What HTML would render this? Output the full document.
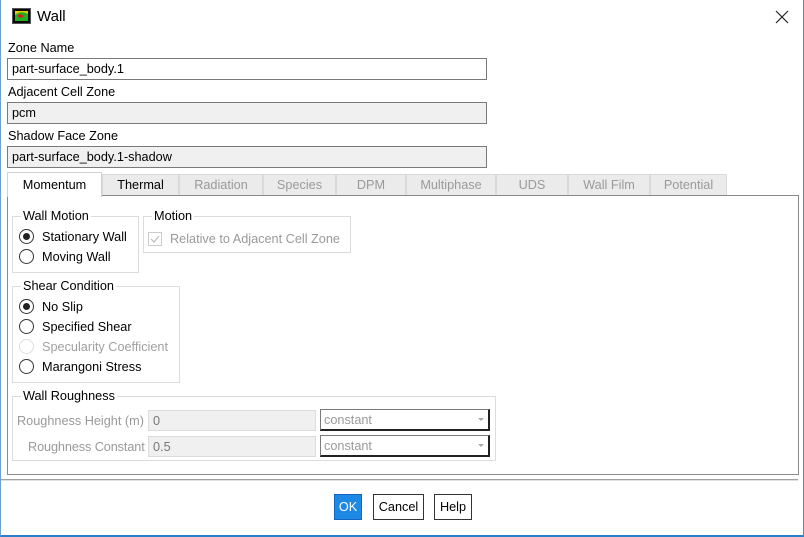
<!DOCTYPE html>
<html><head><meta charset="utf-8"><style>
*{box-sizing:border-box;margin:0;padding:0}
body{width:804px;height:537px;background:#fff;font-family:"Liberation Sans",sans-serif;font-size:12.7px;color:#000;position:relative;overflow:hidden}
.a{position:absolute;white-space:nowrap}
.frame{position:absolute;left:0;top:0;width:804px;height:537px;border-left:1px solid #6f9fd0;border-right:1px solid #3c8fd0;border-bottom:2px solid #2b7fc8}
.inp{position:absolute;border:1px solid #7a7a7a;height:22px;padding-left:4px;line-height:20px;font-size:12.7px}
.dis{background:#f0f0f0}
.tab{position:absolute;top:174px;height:21px;background:#ebebeb;border:1px solid #dadada;border-bottom:none;text-align:center;line-height:21px;color:#9a9a9a}
.grp{position:absolute;border:1px solid #dcdcdc}
.lg{position:absolute;background:#fff;padding:0 2px;top:-8px;left:8px;line-height:14px}
.rad{position:absolute;width:15px;height:15px;border:1px solid #333;border-radius:50%;background:#fff}
.rad.on::after{content:"";position:absolute;left:3px;top:3px;width:7px;height:7px;border-radius:50%;background:#222}
.sel{position:absolute;left:320px;width:170px;height:22px;border:1px solid #7a7a7a;border-right:2px solid #222;border-bottom:2px solid #222;color:#9a9a9a;padding-left:3px;line-height:21px}
.sel::after{content:"";position:absolute;right:4px;top:8px;border-left:3px solid transparent;border-right:3px solid transparent;border-top:3px solid #aaa}
.btn{position:absolute;top:494px;height:26px;border:1px solid #333;background:#fff;text-align:center;line-height:24px}
</style></head><body>
<div class="frame"></div>
<svg class="a" style="left:12px;top:8px" width="19" height="16" viewBox="0 0 19 16"><rect x="0.5" y="0.5" width="18" height="15" fill="#0a0a0a" stroke="#555"/><rect x="3" y="3" width="13" height="10" fill="#e0d000"/><path d="M3 7 Q9 2 16 6 L16 13 L3 13Z" fill="#20b020"/><path d="M6 7 Q9 5 12 8 Q9 11 6 9Z" fill="#d02020"/></svg>
<div class="a" style="left:37px;top:8px;font-size:15px">Wall</div>
<svg class="a" style="left:775px;top:10px" width="14" height="14"><path d="M1 1L13 13M13 1L1 13" stroke="#222" stroke-width="1.2"/></svg>

<div class="a" style="left:8px;top:41px">Zone Name</div>
<div class="inp" style="left:7px;top:58px;width:480px">part-surface_body.1</div>
<div class="a" style="left:8px;top:85px">Adjacent Cell Zone</div>
<div class="inp dis" style="left:7px;top:102px;width:480px">pcm</div>
<div class="a" style="left:8px;top:129px">Shadow Face Zone</div>
<div class="inp dis" style="left:7px;top:146px;width:480px">part-surface_body.1-shadow</div>

<div class="tab" style="left:102px;width:77px;color:#000">Thermal</div>
<div class="tab" style="left:179px;width:84px">Radiation</div>
<div class="tab" style="left:263px;width:73px">Species</div>
<div class="tab" style="left:336px;width:70px">DPM</div>
<div class="tab" style="left:406px;width:90px">Multiphase</div>
<div class="tab" style="left:496px;width:72px">UDS</div>
<div class="tab" style="left:568px;width:82px">Wall Film</div>
<div class="tab" style="left:650px;width:77px">Potential</div>
<div class="a" style="left:7px;top:195px;width:792px;height:280px;border:1px solid #8a8a8a;background:#fff"></div>
<div class="a" style="left:7px;top:172px;width:95px;height:25px;background:#fff;border:1px solid #d0d0d0;border-bottom:none;text-align:center;line-height:24px">Momentum</div>

<div class="grp" style="left:12px;top:216px;width:127px;height:57px"><div class="lg">Wall Motion</div></div>
<div class="rad on" style="left:19px;top:229px"></div><div class="a" style="left:42px;top:230px">Stationary Wall</div>
<div class="rad" style="left:19px;top:249px"></div><div class="a" style="left:42px;top:250px">Moving Wall</div>

<div class="grp" style="left:143px;top:216px;width:208px;height:37px"><div class="lg">Motion</div></div>
<div class="a" style="left:148px;top:232px;width:14px;height:14px;border:1px solid #ccc"></div>
<svg class="a" style="left:148px;top:232px" width="14" height="14"><path d="M3 7L6 10L11 4" stroke="#bbb" fill="none" stroke-width="1.2"/></svg>
<div class="a" style="left:170px;top:232px;color:#9a9a9a">Relative to Adjacent Cell Zone</div>

<div class="grp" style="left:12px;top:286px;width:168px;height:97px"><div class="lg">Shear Condition</div></div>
<div class="rad on" style="left:19px;top:299px"></div><div class="a" style="left:42px;top:300px">No Slip</div>
<div class="rad" style="left:19px;top:319px"></div><div class="a" style="left:42px;top:320px">Specified Shear</div>
<div class="rad" style="left:19px;top:339px;border-color:#ddd"></div><div class="a" style="left:42px;top:340px;color:#a0a0a0">Specularity Coefficient</div>
<div class="rad" style="left:19px;top:359px"></div><div class="a" style="left:42px;top:360px">Marangoni Stress</div>

<div class="grp" style="left:12px;top:396px;width:484px;height:65px"><div class="lg">Wall Roughness</div></div>
<div class="a" style="left:17px;top:414px;color:#9a9a9a">Roughness Height (m)</div>
<div class="inp dis" style="left:148px;top:410px;width:168px;height:21px;border-color:#ddd;color:#777">0</div>
<div class="sel" style="top:409px">constant</div>
<div class="a" style="left:28px;top:440px;color:#9a9a9a;letter-spacing:-0.1px">Roughness Constant</div>
<div class="inp dis" style="left:148px;top:436px;width:168px;height:21px;border-color:#ddd;color:#777">0.5</div>
<div class="sel" style="top:435px">constant</div>

<div class="a" style="left:1px;top:479px;width:797px;height:2px;border-top:1px solid #a0a0a0;border-bottom:1px solid #e0e0e0"></div>

<div class="btn" style="left:334px;width:28px;background:#1e88e5;border-color:#1565c0;color:#fff">OK</div>
<div class="btn" style="left:373px;width:51px">Cancel</div>
<div class="btn" style="left:434px;width:38px">Help</div>
</body></html>
